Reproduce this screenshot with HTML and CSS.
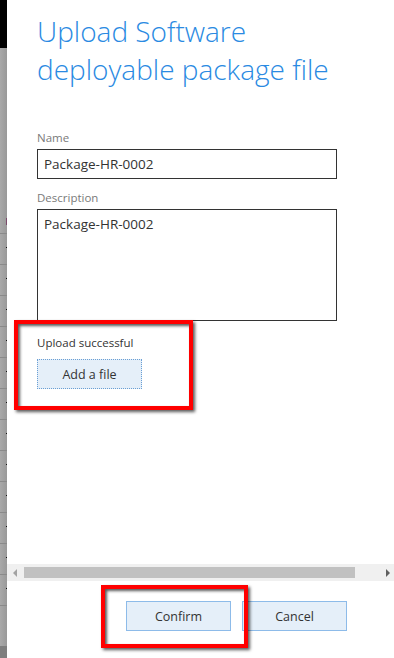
FILE: index.html
```html
<!DOCTYPE html>
<html lang="en">
<head>
    <meta charset="UTF-8">
    <meta name="viewport" content="width=device-width, initial-scale=1.0">
    <title>Upload Software deployable package file</title>
    <link rel="stylesheet" href="styles.css">
</head>
<body>
    <div class="page">
        <div class="rail">
            <div class="rail-top"></div>
            <div class="rail-gap"><span class="rail-mark"></span></div>
            <div class="rail-row"><span class="rail-dot"></span></div>
            <div class="rail-row"><span class="rail-dot"></span></div>
            <div class="rail-row"><span class="rail-dot"></span></div>
            <div class="rail-row"><span class="rail-dot"></span></div>
            <div class="rail-row"><span class="rail-dot"></span></div>
            <div class="rail-row"><span class="rail-dot"></span></div>
            <div class="rail-row"><span class="rail-dot"></span></div>
            <div class="rail-row"><span class="rail-dot"></span></div>
            <div class="rail-row"><span class="rail-dot"></span></div>
            <div class="rail-row"><span class="rail-dot"></span></div>
            <div class="rail-row"><span class="rail-dot"></span></div>
            <div class="rail-row"><span class="rail-dot"></span></div>
            <div class="rail-fill"></div>
            <div class="rail-bottom"></div>
        </div>

        <div class="panel">
            <div class="content">
                <h1 class="title">Upload Software deployable package file</h1>

                <label class="field-label">Name</label>
                <div class="input">Package-HR-0002</div>

                <label class="field-label">Description</label>
                <div class="input textarea">Package-HR-0002</div>

                <p class="status">Upload successful</p>
                <button class="btn add-file">Add a file</button>
            </div>

            <div class="hscroll">
                <span class="arrow arrow-left"></span>
                <div class="thumb"></div>
                <span class="arrow arrow-right"></span>
            </div>

            <div class="footer">
                <button class="btn">Confirm</button>
                <button class="btn">Cancel</button>
            </div>
        </div>

        <!-- annotation boxes from the screenshot tool -->
        <div class="callout callout-upload"></div>
        <div class="callout callout-confirm"></div>
    </div>
</body>
</html>
```

FILE: styles.css
```css
:root {
    --title-blue: #2a8ae2;
    --text-color: #333;
    --label-color: #7a7a7a;
    --btn-bg: #e5eff9;
    --btn-border: #8dbbe9;
}

* {
    margin: 0;
    padding: 0;
    box-sizing: border-box;
}

body {
    font-family: 'Open Sans', 'Noto Sans', sans-serif;
    color: var(--text-color);
    background: #fff;
}

.page {
    position: relative;
    display: flex;
    width: 394px;
    height: 658px;
    overflow: hidden;
}

/* grey strip of the page behind the dialog */
.rail {
    width: 7px;
    display: flex;
    flex-direction: column;
    background: linear-gradient(to right, #a9a9a9, #999);
}

.rail-top {
    height: 48px;
    background: #000;
}

.rail-gap {
    height: 186px;
    border-bottom: 1px solid #8a8a8a;
    position: relative;
}

.rail-mark {
    position: absolute;
    right: 0;
    top: 170px;
    width: 1px;
    height: 7px;
    background: #7a4a6a;
}

.rail-row {
    height: 31px;
    border-bottom: 1px solid #8a8a8a;
    position: relative;
}

.rail-dot {
    position: absolute;
    right: 0;
    top: 13px;
    width: 1px;
    height: 1px;
    background: #111;
}

.rail-fill {
    flex: 1;
}

.rail-bottom {
    height: 12px;
    background: #7e7e7e;
}

.panel {
    flex: 1;
    display: flex;
    flex-direction: column;
    background: #fff;
}

.content {
    flex: 1;
    padding: 12px 0 0 30px;
}

.title {
    width: 320px;
    font-size: 28px;
    font-weight: 300;
    line-height: 38px;
    color: var(--title-blue);
    margin-bottom: 42px;
}

.field-label {
    display: block;
    font-size: 11.5px;
    line-height: 16px;
    color: var(--label-color);
    margin-bottom: 3px;
}

.input {
    width: 300px;
    height: 30px;
    border: 1px solid #333;
    padding: 5px 6px;
    font-size: 13.5px;
    line-height: 18px;
    margin-bottom: 11px;
}

.textarea {
    height: 112px;
    margin-bottom: 0;
}

.status {
    font-size: 11.5px;
    line-height: 16px;
    margin-top: 14px;
}

.btn {
    font-family: inherit;
    font-size: 12.5px;
    color: var(--text-color);
    background: var(--btn-bg);
    border: 1px solid var(--btn-border);
    width: 105px;
    height: 30px;
    cursor: pointer;
}

.add-file {
    margin-top: 8px;
    border: 1px dotted #6a9fd4;
}

.hscroll {
    height: 17px;
    background: #f0f0f0;
    display: flex;
    align-items: center;
    padding: 0 4px;
    margin-bottom: 20px;
}

.arrow {
    width: 0;
    height: 0;
    border-top: 4px solid transparent;
    border-bottom: 4px solid transparent;
}

.arrow-left {
    border-right: 4px solid #a3a3a3;
    margin: 0 7px 0 2px;
}

.arrow-right {
    border-left: 4px solid #606060;
    margin: 0 0 0 auto;
}

.thumb {
    width: 331px;
    height: 11px;
    background: #c1c1c1;
}

.footer {
    height: 57px;
    display: flex;
    justify-content: flex-end;
    align-items: flex-start;
    gap: 11px;
    padding-right: 47px;
}

.callout {
    position: absolute;
    border: 4px solid #f00;
    box-shadow: 2px 2px 3px rgba(0, 0, 0, 0.65), inset 2px 2px 3px rgba(0, 0, 0, 0.65);
}

.callout-upload {
    left: 14px;
    top: 320px;
    width: 179px;
    height: 90px;
}

.callout-confirm {
    left: 101px;
    top: 585px;
    width: 147px;
    height: 63px;
}
```
